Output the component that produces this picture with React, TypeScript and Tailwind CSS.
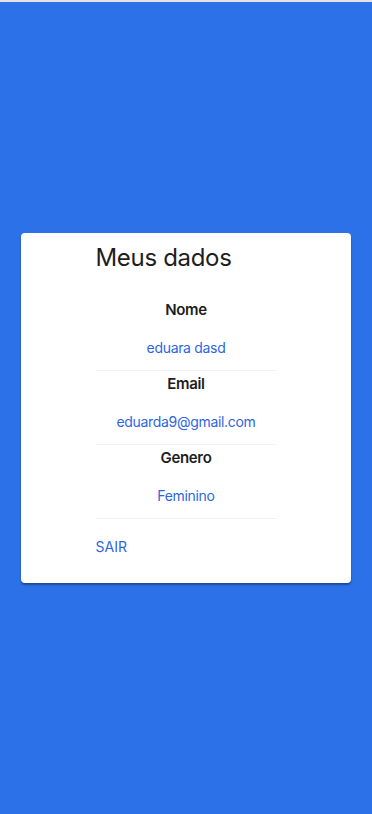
import React from "react";

const fields = [
  { label: "Nome", value: "eduara dasd" },
  { label: "Email", value: "eduarda9@gmail.com" },
  { label: "Genero", value: "Feminino" },
];

const App = () => {
  return (
    <div className="font-['Inter',sans-serif] tracking-[-0.02em]">
      <div className="h-[2px] bg-[#e4e4e4]" />
      <div className="flex min-h-[812px] items-center justify-center bg-[#2c71e8]">
        <div className="w-[330px] rounded bg-white pt-[9px] pb-[26px] shadow-[0_2px_2px_rgba(0,0,0,0.35)]">
          <div className="mx-auto w-[181px]">
            <h1 className="text-2xl leading-8 text-[#1e1e1e]">Meus dados</h1>
            <div className="mt-[23px]">
              {fields.map((field) => (
                <div
                  key={field.label}
                  className="border-b border-[#f3f3f3] pb-3 text-center"
                >
                  <p className="text-[15px] leading-[26px] font-semibold text-[#1e1e1e]">
                    {field.label}
                  </p>
                  <p className="mt-[15px] text-sm leading-5 text-[#2e66e2]">
                    {field.value}
                  </p>
                </div>
              ))}
            </div>
            <button className="mt-[18px] block text-sm leading-5 tracking-normal uppercase text-[#2e66e2]">
              Sair
            </button>
          </div>
        </div>
      </div>
    </div>
  );
};

export default App;
